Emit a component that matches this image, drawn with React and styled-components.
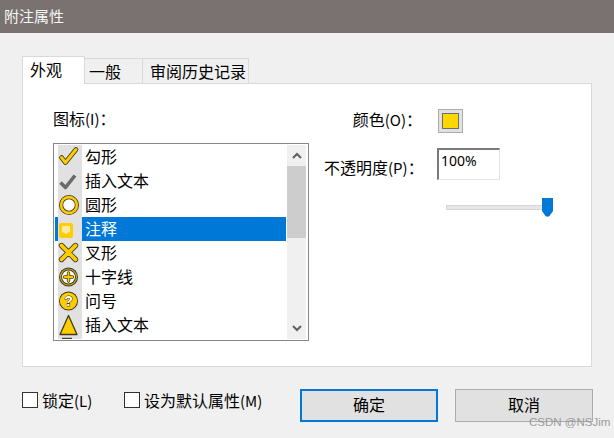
import React from 'react'
import styled, { createGlobalStyle } from 'styled-components'

const GlobalStyle = createGlobalStyle`
  html, body {
    margin: 0;
    padding: 0;
    background: #f0f0f0;
  }
`

const Dialog = styled.div`
  position: relative;
  width: 614px;
  height: 438px;
  overflow: hidden;
  display: flex;
  flex-direction: column;
  background: #f0f0f0;
  color: #000;
  font-family: "Noto Sans CJK SC", "Noto Sans", sans-serif;
  font-size: 16px;
`

const Key = styled.span`
  font-size: 15px;
`

const TitleBar = styled.div`
  height: 33px;
  line-height: 31px;
  padding-left: 4px;
  background: #7a7270;
  color: #f6f6f6;
  font-size: 15px;
`

const Content = styled.div`
  padding: 23px 22px 0;
`

const Tabs = styled.div`
  display: flex;
  align-items: flex-end;
  margin-bottom: -1px;
`

const Tab = styled.div`
  position: relative;
  z-index: ${p => (p.$active ? 1 : 0)};
  box-sizing: border-box;
  width: ${p => p.$width}px;
  height: ${p => (p.$active ? 28 : 26)}px;
  padding-left: ${p => p.$pad}px;
  line-height: ${p => (p.$active ? 24 : 25)}px;
  background: ${p => (p.$active ? '#fff' : '#f0f0f0')};
  border: 1px solid #d9d9d9;
  border-left-width: ${p => (p.$first ? 1 : 0)}px;
  border-bottom-width: ${p => (p.$active ? 0 : 1)}px;
  white-space: nowrap;
`

const Panel = styled.div`
  box-sizing: border-box;
  width: 570px;
  height: 284px;
  padding: 22px 0 0 30px;
  display: flex;
  gap: 15px;
  background: #fff;
  border: 1px solid #d9d9d9;
`

const LeftColumn = styled.div`
  width: 256px;
`

const FieldLabel = styled.div`
  height: 24px;
  line-height: 24px;
  margin-bottom: 13px;
`

const ListBox = styled.div`
  box-sizing: border-box;
  width: 256px;
  height: 198px;
  padding: 1px 2px 1px 1px;
  display: flex;
  overflow: hidden;
  border: 1px solid #828790;
`

const Rows = styled.div`
  width: 231px;
  margin-right: 1px;
  overflow: hidden;
`

const Row = styled.div`
  display: flex;
  height: 24px;
  padding-left: 3px;
  line-height: 23px;
  white-space: nowrap;
  background: ${p => (p.$selected ? '#0078d7' : '#fff')};
  color: ${p => (p.$selected ? '#fff' : '#000')};
`

const IconCell = styled.div`
  width: 24px;
  height: 24px;
  margin-right: 3px;
  background: #e1e1e1;
  flex: none;
`

const ScrollBar = styled.div`
  width: 19px;
  display: flex;
  flex-direction: column;
  background: #f0f0f0;
`

const ScrollArrow = styled.div`
  height: 21px;
  display: flex;
  align-items: center;
  justify-content: center;
  flex: none;
`

const ScrollThumb = styled.div`
  height: 72px;
  background: #cdcdcd;
  flex: none;
`

const ScrollTrack = styled.div`
  flex: 1;
`

const RightColumn = styled.div`
  padding-top: 3px;
`

const FormRow = styled.div`
  display: flex;
  align-items: flex-start;
  margin-bottom: ${p => p.$gap}px;
`

const FormLabel = styled.div`
  width: 98px;
  margin-top: ${p => p.$top}px;
  line-height: 24px;
  text-align: right;
  white-space: nowrap;
`

const Swatch = styled.div`
  box-sizing: border-box;
  width: 25px;
  height: 24px;
  margin-left: 16px;
  padding: 3px;
  background: #e1e1e1;
  border: 1px solid #adadad;
`

const SwatchColor = styled.div`
  height: 100%;
  box-sizing: border-box;
  background: #ffd700;
  border: 1px solid #6e6e6e;
`

const Percent = styled.div`
  box-sizing: border-box;
  width: 63px;
  height: 32px;
  margin-left: 15px;
  padding: 1px 0 0 2px;
  line-height: 20px;
  font-family: "Noto Sans", sans-serif;
  font-size: 14px;
  background: #fff;
  border: 1px solid #e3e3e3;
  border-top: 2px solid #7a7a7a;
  border-left: 2px solid #7a7a7a;
`

const Slider = styled.div`
  position: relative;
  width: 107px;
  height: 19px;
  margin-left: 122px;
  display: flex;
  align-items: center;
`

const SliderTrack = styled.div`
  box-sizing: border-box;
  width: 100%;
  height: 5px;
  margin-top: -1px;
  background: #e7e7e7;
  border: 1px solid #d6d6d6;
`

const SliderThumb = styled.svg`
  position: absolute;
  right: 0;
  top: 0;
`

const Footer = styled.div`
  display: flex;
  align-items: flex-start;
  padding: 22px 21px 0 22px;
`

const CheckItem = styled.label`
  display: flex;
  align-items: center;
  width: ${p => p.$width}px;
  height: 22px;
  white-space: nowrap;
`

const CheckBox = styled.span`
  box-sizing: border-box;
  width: 16px;
  height: 16px;
  margin-right: 4px;
  background: #fff;
  border: 1px solid #333;
  flex: none;
`

const Buttons = styled.div`
  display: flex;
  gap: 17px;
  margin-left: auto;
`

const Button = styled.button`
  box-sizing: border-box;
  width: 138px;
  height: 33px;
  padding: 0 0 4px;
  font: inherit;
  color: #000;
  background: #e1e1e1;
  border: ${p => (p.$primary ? '2px solid #0078d7' : '1px solid #adadad')};
`

const Watermark = styled.div`
  position: absolute;
  left: 529px;
  top: 415px;
  font-family: "Liberation Sans", sans-serif;
  font-size: 11.5px;
  line-height: 14px;
  color: #8e8e8e;
  opacity: 0.85;
`

const Y = '#ffcc00'
const D = '#3f3a20'

const Stroked = ({ d, w = 5, edge = 1.5 }) => (
  <>
    <path d={d} fill="none" stroke={D} strokeWidth={w + edge * 1.4} strokeLinecap="round" strokeLinejoin="round" />
    <path d={d} fill="none" stroke={Y} strokeWidth={w} strokeLinecap="round" strokeLinejoin="round" />
  </>
)

const icons = {
  check: <Stroked d="M3.5 12.5 L7.5 17.5 L18 4.5" w={3} edge={1.2} />,
  grayCheck: <path d="M2.5 13.5 L7.5 18.5 L17 6.5" fill="none" stroke="#6a6a6a" strokeWidth={3.6} strokeLinejoin="round" />,
  circle: (
    <>
      <circle cx="11" cy="12" r="10" fill={D} />
      <circle cx="11" cy="12" r="9.2" fill={Y} />
      <circle cx="11" cy="12" r="6.6" fill={D} />
      <circle cx="11" cy="12" r="5.8" fill="#fff" />
    </>
  ),
  note: (
    <>
      <rect x="1" y="6" width="14" height="15" rx="2" fill={Y} />
      <path d="M4.5 9.5 H11.5 V15 H9.5 L8 17 L6.5 15 H4.5 Z" fill="#ffe9a0" stroke="#fff3c8" strokeWidth="0.8" />
    </>
  ),
  cross: <Stroked d="M3.5 4.5 L17.5 18.5 M17.5 4.5 L3.5 18.5" w={3.8} edge={1.1} />,
  crosshair: (
    <>
      <circle cx="10.5" cy="12" r="9.5" fill={D} />
      <circle cx="10.5" cy="12" r="8.6" fill="#cda822" />
      <circle cx="10.5" cy="12" r="7.4" fill={D} />
      <circle cx="10.5" cy="12" r="6.5" fill="#fff" />
      <Stroked d="M10.5 8 V16 M6.5 12 H14.5" w={1.8} edge={1.1} />
    </>
  ),
  question: (
    <>
      <circle cx="10.5" cy="12" r="9.5" fill={D} />
      <circle cx="10.5" cy="12" r="8.6" fill={Y} />
      <text x="10.5" y="17" textAnchor="middle" fontFamily="Liberation Sans, sans-serif" fontWeight="700" fontSize="14" fill="#fff" stroke={D} strokeWidth="1" paintOrder="stroke">?</text>
    </>
  ),
  triangle: <path d="M10.5 2.5 L19 21.5 H2 Z" fill={Y} stroke={D} strokeWidth="1.3" strokeLinejoin="round" />,
  sliver: <path d="M4 1.5 H14" stroke={D} strokeWidth="1.4" fill="none" />,
}

const items = [
  { icon: 'check', label: '勾形' },
  { icon: 'grayCheck', label: '插入文本' },
  { icon: 'circle', label: '圆形' },
  { icon: 'note', label: '注释', selected: true },
  { icon: 'cross', label: '叉形' },
  { icon: 'crosshair', label: '十字线' },
  { icon: 'question', label: '问号' },
  { icon: 'triangle', label: '插入文本' },
  { icon: 'sliver', label: '' },
]

const Chevron = ({ up }) => (
  <svg width="10" height="7" viewBox="0 0 10 7">
    <path d={up ? 'M1 6 L5 2 L9 6' : 'M1 1 L5 5 L9 1'} fill="none" stroke="#606060" strokeWidth="2" />
  </svg>
)

const App = () => (
  <Dialog>
    <GlobalStyle />
    <TitleBar>附注属性</TitleBar>
    <Content>
      <Tabs>
        <Tab $active $first $width={63} $pad={7}>外观</Tab>
        <Tab $width={58} $pad={4}>一般</Tab>
        <Tab $width={106} $pad={7}>审阅历史记录</Tab>
      </Tabs>
      <Panel>
        <LeftColumn>
          <FieldLabel>图标<Key>(I)</Key>：</FieldLabel>
          <ListBox>
            <Rows>
              {items.map((item, i) => (
                <Row key={i} $selected={item.selected}>
                  <IconCell>
                    <svg width="24" height="24" viewBox="0 0 24 24">{icons[item.icon]}</svg>
                  </IconCell>
                  {item.label}
                </Row>
              ))}
            </Rows>
            <ScrollBar>
              <ScrollArrow><Chevron up /></ScrollArrow>
              <ScrollThumb />
              <ScrollTrack />
              <ScrollArrow><Chevron /></ScrollArrow>
            </ScrollBar>
          </ListBox>
        </LeftColumn>
        <RightColumn>
          <FormRow $gap={15}>
            <FormLabel $top={-2}>颜色<Key>(O)</Key>：</FormLabel>
            <Swatch><SwatchColor /></Swatch>
          </FormRow>
          <FormRow $gap={18}>
            <FormLabel $top={7}>不透明度<Key>(P)</Key>：</FormLabel>
            <Percent>100%</Percent>
          </FormRow>
          <Slider>
            <SliderTrack />
            <SliderThumb width="11" height="19" viewBox="0 0 11 19">
              <path d="M0 0 H11 V13 L7.5 18 Q5.5 19.5 3.5 18 L0 13 Z" fill="#0078d7" />
            </SliderThumb>
          </Slider>
        </RightColumn>
      </Panel>
    </Content>
    <Footer>
      <CheckItem $width={102}><CheckBox />锁定<Key>(L)</Key></CheckItem>
      <CheckItem $width={150}><CheckBox />设为默认属性<Key>(M)</Key></CheckItem>
      <Buttons>
        <Button $primary>确定</Button>
        <Button>取消</Button>
      </Buttons>
    </Footer>
    <Watermark>CSDN @NSJim</Watermark>
  </Dialog>
)

export default App
